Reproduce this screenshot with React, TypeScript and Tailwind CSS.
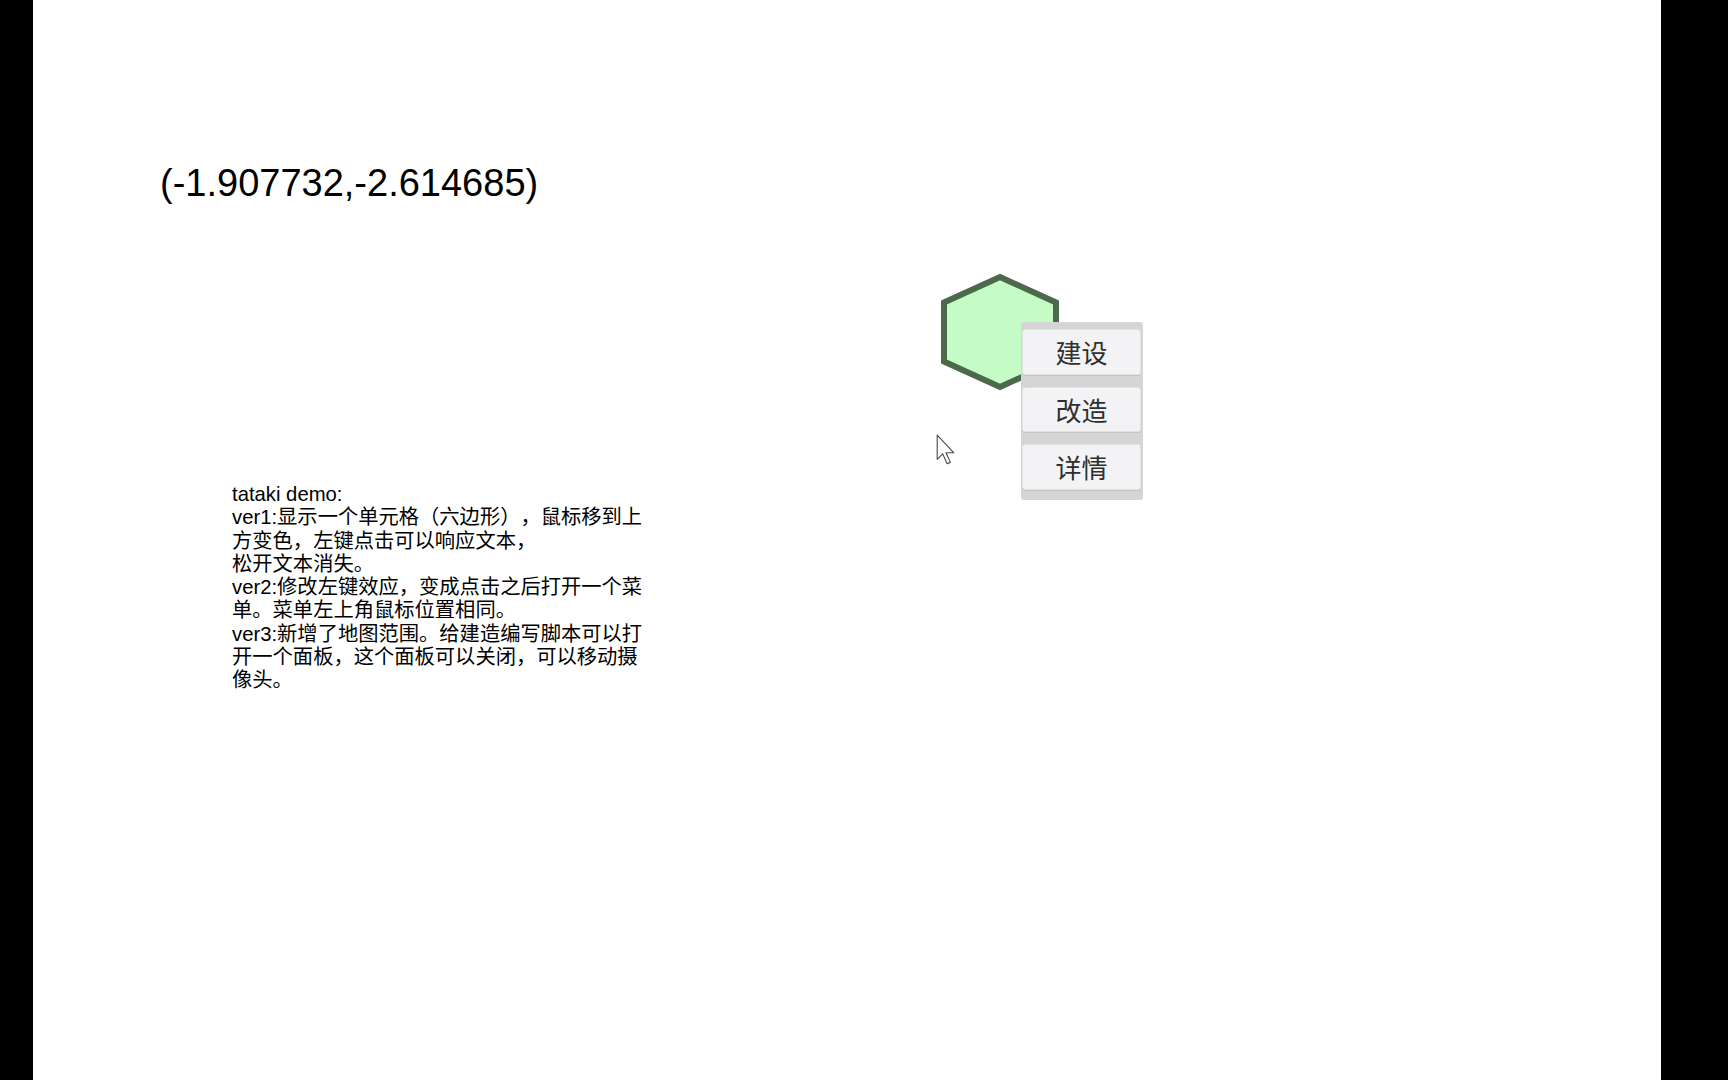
import React from 'react';

const notes: string[] = [
  'tataki demo:',
  'ver1:显示一个单元格（六边形），鼠标移到上',
  '方变色，左键点击可以响应文本，',
  '松开文本消失。',
  'ver2:修改左键效应，变成点击之后打开一个菜',
  '单。菜单左上角鼠标位置相同。',
  'ver3:新增了地图范围。给建造编写脚本可以打',
  '开一个面板，这个面板可以关闭，可以移动摄',
  '像头。',
];

const menuItems = ['建设', '改造', '详情'];

const HexCell: React.FC = () => (
  <svg className="absolute left-[903px] top-[269px]" width={128} height={128} viewBox="0 0 128 128">
    <polygon
      points="64,8 120,33.5 120,92.5 64,118 8,92.5 8,33.5"
      fill="#c5fcc6"
      stroke="#4b6a4c"
      strokeWidth={6}
      strokeLinejoin="miter"
    />
  </svg>
);

const PopupMenu: React.FC = () => (
  <div className="absolute left-[988px] top-[322px] flex w-[122px] flex-col gap-[12px] rounded-[3px] bg-[#d5d5d6] pl-[1px] pr-[2px] pt-[7px] pb-[10px]">
    {menuItems.map((label, i) => (
      <button
        key={label}
        className={`flex ${i === 1 ? 'h-[45px]' : 'h-[46px]'} w-full items-center justify-center rounded-[3px] border border-[#e2e2e4] bg-[#f3f3f5] text-[26px] leading-none text-[#2f2f2f] shadow-[0_1px_0_#c4c4c6]`}
        style={{ fontFamily: '"Noto Sans CJK SC", "Liberation Sans", sans-serif' }}
      >
        {label}
      </button>
    ))}
  </div>
);

const Cursor: React.FC = () => (
  <svg className="absolute left-[903px] top-[434px]" width={20} height={33} viewBox="0 0 18 30">
    <path d="M1 1 L1 23 L6 18 L10 27 L13 25.8 L9 17 L16 17 Z" fill="#ffffff" stroke="#4a4a4a" strokeWidth={1} strokeLinejoin="round" />
  </svg>
);

export default function App() {
  return (
    <div className="flex h-screen w-full bg-black">
      <div className="w-[33px] shrink-0 bg-black" />
      <div className="relative flex-1 overflow-hidden bg-white">
        <div
          className="pl-[127px] pt-[164px] text-[38px] leading-none text-black"
          style={{ fontFamily: '"Liberation Sans", Arial, sans-serif' }}
        >
          (-1.907732,-2.614685)
        </div>

        <div
          className="mt-[281px] pl-[199px] text-[20.3px] leading-[23.3px] text-black [text-spacing-trim:space-all]"
          style={{ fontFamily: '"Liberation Sans", "Noto Sans CJK SC", sans-serif' }}
        >
          {notes.map((line, i) => (
            <div key={i} className="whitespace-nowrap">
              {line}
            </div>
          ))}
        </div>

        <HexCell />
        <PopupMenu />
        <Cursor />
      </div>
      <div className="w-[67px] shrink-0 bg-black" />
    </div>
  );
}
